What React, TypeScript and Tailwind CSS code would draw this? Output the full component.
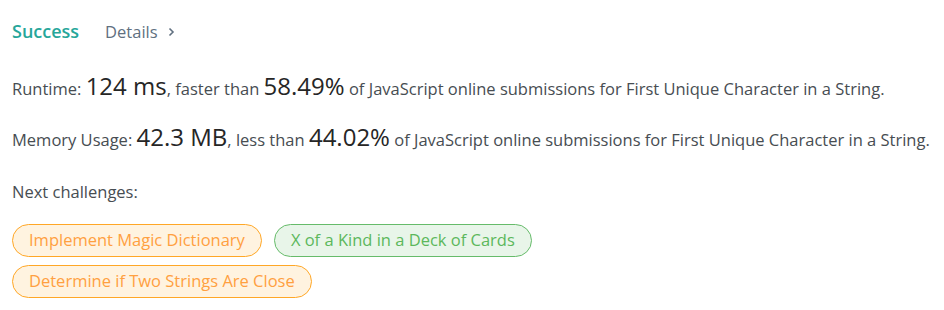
import React from "react";

type Challenge = { title: string; level: "medium" | "easy" };

const challenges: Challenge[] = [
  { title: "Implement Magic Dictionary", level: "medium" },
  { title: "X of a Kind in a Deck of Cards", level: "easy" },
  { title: "Determine if Two Strings Are Close", level: "medium" },
];

const Stat: React.FC<{ label: string; value: string; cmp: string; pct: string }> = ({
  label,
  value,
  cmp,
  pct,
}) => (
  <div className="text-[16.5px] text-[#474d52] whitespace-nowrap leading-[32px]">
    {label}: <span className="text-[24px] text-[#262626]">{value}</span>, {cmp}{" "}
    <span className="text-[24px] text-[#262626]">{pct}</span> of JavaScript online
    submissions for First Unique Character in a String.
  </div>
);

export default function App() {
  return (
    <div
      className="w-[944px] h-[310px] bg-white pl-[12px] pt-[18px]"
      style={{ fontFamily: '"Open Sans", "Noto Sans", sans-serif' }}
    >
      <div className="flex items-baseline gap-[26px] h-[28px]">
        <span className="text-[18px] font-semibold text-[#26a69a]">Success</span>
        <span className="flex items-baseline gap-[10px] text-[16.5px] text-[#607080]">
          Details
          <svg width="7" height="10" viewBox="0 0 7 10" className="self-center">
            <path d="M1.5 1.5 L5 5 L1.5 8.5" fill="none" stroke="#607080" strokeWidth="1.6" />
          </svg>
        </span>
      </div>
      <div className="mt-[24px]">
        <Stat label="Runtime" value="124 ms" cmp="faster than" pct="58.49%" />
      </div>
      <div className="mt-[16px]">
        <Stat label="Memory Usage" value="42.3 MB" cmp="less than" pct="44.02%" />
      </div>
      <div className="mt-[24px] text-[16.5px] text-[#474d52] leading-[24px]">Next challenges:</div>
      <div className="mt-[20px] flex flex-wrap gap-x-[12px] gap-y-[8px] w-[560px]">
        {challenges.map((c) => (
          <span
            key={c.title}
            className={
              c.level === "medium"
                ? "h-[33px] px-[16px] flex items-center rounded-full border border-[#ffa726] bg-[#fff3e0] text-[#ffa040] text-[16.5px]"
                : "h-[33px] px-[16px] flex items-center rounded-full border border-[#66bb6a] bg-[#e8f5e9] text-[#5cb85c] text-[16.5px]"
            }
          >
            {c.title}
          </span>
        ))}
      </div>
    </div>
  );
}
